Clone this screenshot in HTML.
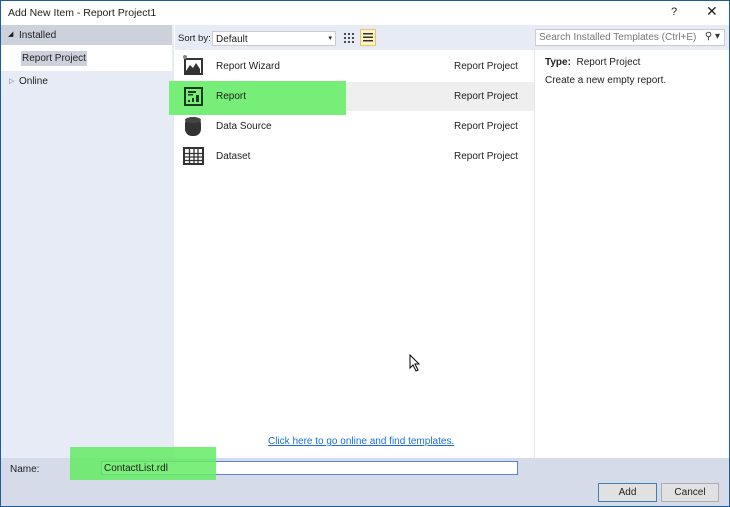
<!DOCTYPE html>
<html><head><meta charset="utf-8"><style>
*{margin:0;padding:0;box-sizing:border-box}
body{width:730px;height:507px;overflow:hidden;font-family:"Liberation Sans",sans-serif;font-size:10px;color:#1e1e1e;background:#fff;position:relative}
.a{position:absolute}
</style></head><body>
<div class="a" style="left:0;top:0;width:730px;height:507px;border:1px solid #1b5d97"></div>
<div class="a" style="left:1px;top:1px;width:728px;height:24px;background:#fff"></div>
<div class="a" style="left:8px;top:7px;font-size:10.5px">Add New Item - Report Project1</div>
<div class="a" style="left:671px;top:6px;font-size:11px">?</div>
<div class="a" style="left:706px;top:3px;font-size:14px">✕</div>
<!-- left panel -->
<div class="a" style="left:1px;top:25px;width:173px;height:433px;background:#e6ebf5"></div>
<div class="a" style="left:1px;top:25px;width:171px;height:20px;background:#cdd1dc"></div>
<div class="a" style="left:8px;top:30px;font-size:7px">◢</div>
<div class="a" style="left:19px;top:30px">Installed</div>
<div class="a" style="left:1px;top:45px;width:171px;height:26px;background:#fff"></div>
<div class="a" style="left:21px;top:51px;background:#cdd1dc;padding:2px 1px">Report Project</div>
<div class="a" style="left:9px;top:77px;font-size:7px;color:#777">▷</div>
<div class="a" style="left:19px;top:76px">Online</div>
<!-- toolbar -->
<div class="a" style="left:175px;top:25px;width:554px;height:25px;background:#e6ebf5"></div>
<div class="a" style="left:178px;top:33px;font-size:9.5px">Sort by:</div>
<div class="a" style="left:212px;top:31px;width:124px;height:15px;background:#fff;border:1px solid #ccc;padding:2px 3px">Default<span style="position:absolute;right:3px;top:2px;font-size:7px">▾</span></div>
<div class="a" style="left:343px;top:32px;width:11px;height:11px;background:radial-gradient(circle,#444 1px,transparent 1.3px) 0 0/4px 4px"></div>
<div class="a" style="left:360px;top:29px;width:16px;height:17px;background:#fff4c9;border:1px solid #e5c365"></div>
<div class="a" style="left:363px;top:33px;width:10px;height:9px;background:repeating-linear-gradient(#333 0 1.5px,transparent 1.5px 3.5px)"></div>
<div class="a" style="left:535px;top:29px;width:190px;height:17px;background:#fff;border:1px solid #ccc;padding:2px 3px;color:#777">Search Installed Templates (Ctrl+E)<span style="position:absolute;right:4px;top:1px;color:#333">⚲ ▾</span></div>
<!-- middle list -->
<div class="a" style="left:175px;top:50px;width:359px;height:408px;background:#fff"></div>
<div class="a" style="left:175px;top:82px;width:359px;height:29px;background:#efefef"></div>
<div class="a" style="left:534px;top:50px;width:1px;height:408px;background:#e6e6e6"></div>
<div class="a" style="left:169px;top:81px;width:177px;height:34px;background:#77ee77"></div>
<svg class="a" style="left:181px;top:54px" width="24" height="24"><rect x="3" y="4" width="19" height="17" fill="#333"/><rect x="5" y="6" width="15" height="13" fill="#fff"/><path d="M5 17 L9 11 L12 14 L15 9 L19 15 L19 19 L5 19Z" fill="#333"/><circle cx="4" cy="3" r="2" fill="#888"/></svg>
<svg class="a" style="left:181px;top:84px" width="24" height="24"><rect x="3" y="3" width="19" height="19" fill="#1e3a1e"/><rect x="5" y="5" width="15" height="15" fill="#77ee77"/><rect x="7" y="7" width="8" height="2" fill="#1e3a1e"/><rect x="7" y="10" width="5" height="1.5" fill="#1e3a1e"/><rect x="7" y="16" width="2" height="2" fill="#1e3a1e"/><rect x="11" y="14" width="2" height="4" fill="#1e3a1e"/><rect x="15" y="11" width="3" height="7" fill="#1e3a1e"/></svg>
<svg class="a" style="left:181px;top:114px" width="24" height="24"><rect x="4" y="3" width="16" height="19" rx="7" fill="#333"/><ellipse cx="12" cy="6" rx="8" ry="3" fill="#444"/></svg>
<svg class="a" style="left:181px;top:144px" width="24" height="24"><rect x="2" y="3" width="21" height="18" fill="#333"/><rect x="4" y="5" width="17" height="14" fill="#fff"/><path d="M4 9.5H21M4 13H21M4 16.5H21M8.5 5V19M13 5V19M17 5V19" stroke="#333" stroke-width="1.3"/></svg>
<div class="a" style="left:216px;top:61px">Report Wizard</div>
<div class="a" style="left:216px;top:91px">Report</div>
<div class="a" style="left:216px;top:121px">Data Source</div>
<div class="a" style="left:216px;top:151px">Dataset</div>
<div class="a" style="left:454px;top:61px">Report Project</div>
<div class="a" style="left:454px;top:91px">Report Project</div>
<div class="a" style="left:454px;top:121px">Report Project</div>
<div class="a" style="left:454px;top:151px">Report Project</div>
<div class="a" style="left:268px;top:436px;color:#1a6fd6;text-decoration:underline">Click here to go online and find templates.</div>
<!-- right -->
<div class="a" style="left:535px;top:50px;width:190px;height:408px;background:#fff"></div>
<div class="a" style="left:545px;top:57px"><b>Type:</b>&nbsp; Report Project</div>
<div class="a" style="left:545px;top:75px">Create a new empty report.</div>
<!-- bottom -->
<div class="a" style="left:1px;top:458px;width:728px;height:48px;background:#d6dbe9"></div>
<div class="a" style="left:10px;top:464px">Name:</div>
<div class="a" style="left:101px;top:461px;width:417px;height:14px;background:#fff;border:1px solid #5a7fe0"></div>
<div class="a" style="left:70px;top:447px;width:146px;height:33px;background:rgba(100,235,100,.85)"></div>
<div class="a" style="left:104px;top:463px">ContactList.rdl</div>
<div class="a" style="left:598px;top:483px;width:59px;height:19px;background:#e1e1e1;border:1px solid #3c7fb1;text-align:center;padding-top:3px">Add</div>
<div class="a" style="left:661px;top:483px;width:58px;height:19px;background:#e1e1e1;border:1px solid #adadad;text-align:center;padding-top:3px">Cancel</div>
<svg class="a" style="left:409px;top:354px" width="12" height="18"><path d="M1 1V14L4 11L7 17L9 16L6 10H10Z" fill="#fff" stroke="#000"/></svg>
</body></html>
